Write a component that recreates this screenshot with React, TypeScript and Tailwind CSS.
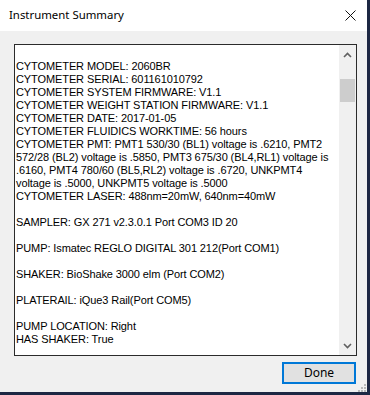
import React from "react"

const lines = [
  "",
  "CYTOMETER MODEL: 2060BR",
  "CYTOMETER SERIAL: 601161010792",
  "CYTOMETER SYSTEM FIRMWARE: V1.1",
  "CYTOMETER WEIGHT STATION FIRMWARE: V1.1",
  "CYTOMETER DATE: 2017-01-05",
  "CYTOMETER FLUIDICS WORKTIME: 56 hours",
  "CYTOMETER PMT: PMT1 530/30 (BL1) voltage is .6210, PMT2",
  "572/28 (BL2) voltage is .5850, PMT3 675/30 (BL4,RL1) voltage is",
  ".6160, PMT4 780/60 (BL5,RL2) voltage is .6720, UNKPMT4",
  "voltage is .5000, UNKPMT5 voltage is .5000",
  "CYTOMETER LASER: 488nm=20mW, 640nm=40mW",
  "",
  "SAMPLER: GX 271 v2.3.0.1 Port COM3 ID 20",
  "",
  "PUMP: Ismatec REGLO DIGITAL 301 212(Port COM1)",
  "",
  "SHAKER: BioShake 3000 elm (Port COM2)",
  "",
  "PLATERAIL: iQue3 Rail(Port COM5)",
  "",
  "PUMP LOCATION: Right",
  "HAS SHAKER: True",
]

// tiny chevron used by the scrollbar arrows
function Chevron({ up }: { up?: boolean }) {
  return (
    <svg width="9" height="6" viewBox="0 0 9 6" className="block">
      <path
        d={up ? "M1 5 L4.5 1.5 L8 5" : "M1 1 L4.5 4.5 L8 1"}
        fill="none"
        stroke="#606060"
        strokeWidth="1.6"
      />
    </svg>
  )
}

function ResizeGrip() {
  const dots = [
    [6, 0],
    [3, 3],
    [6, 3],
    [0, 6],
    [3, 6],
    [6, 6],
  ]
  return (
    <svg width="8" height="8" viewBox="0 0 8 8" className="block">
      {dots.map(([x, y], i) => (
        <rect key={i} x={x} y={y} width="2" height="2" fill="#b8b8b8" />
      ))}
    </svg>
  )
}

export default function App() {
  return (
    <div className="w-[370px] h-[395px] bg-[#1d2743] overflow-hidden">
      <div className="w-[367px] h-[392px] bg-[#f0f0f0] flex flex-col">
        {/* title bar */}
        <div className="h-[31px] bg-white flex items-center justify-between pl-[9px] pr-[11px] shrink-0">
          <span className="text-[11.4px] text-black font-['Noto_Sans',sans-serif] leading-none pb-[1px]">
            Instrument Summary
          </span>
          <svg width="11" height="11" viewBox="0 0 11 11" className="block">
            <path d="M0.5 0.5 L10.5 10.5 M10.5 0.5 L0.5 10.5" stroke="#111" strokeWidth="1" />
          </svg>
        </div>

        {/* body */}
        <div className="flex-1 flex flex-col pt-[13px] pl-[14px]">
          <div className="w-[343px] h-[312px] border border-[#2b2b2b] bg-white flex">
            <div className="flex-1 pt-[2px] pl-[1px] font-['Liberation_Sans',Arial,sans-serif] text-[11px] tracking-[-0.1px] leading-[13px] text-black overflow-hidden">
              {lines.map((l, i) => (
                <div key={i} className="h-[13px] whitespace-nowrap">
                  {l}
                </div>
              ))}
            </div>
            {/* scrollbar */}
            <div className="w-[17px] bg-[#f0f0f0] flex flex-col items-center">
              <div className="h-[17px] w-full flex items-center justify-center pt-[2px]">
                <Chevron up />
              </div>
              <div className="mt-[17px] w-[15px] h-[23px] bg-[#cdcdcd]" />
              <div className="flex-1" />
              <div className="h-[17px] w-full flex items-center justify-center pb-[2px]">
                <Chevron />
              </div>
            </div>
          </div>

          <div className="flex justify-end pr-[11px] pt-[6px]">
            <button className="w-[74px] h-[22px] border-2 border-[#0078d7] bg-[#e1e1e1] text-[12px] text-black font-['Noto_Sans',sans-serif] leading-none flex items-center justify-center pb-[1px]">
              Done
            </button>
          </div>
          <div className="flex-1 flex items-end justify-end pr-[1px] pb-[1px]">
            <ResizeGrip />
          </div>
        </div>
      </div>
    </div>
  )
}
